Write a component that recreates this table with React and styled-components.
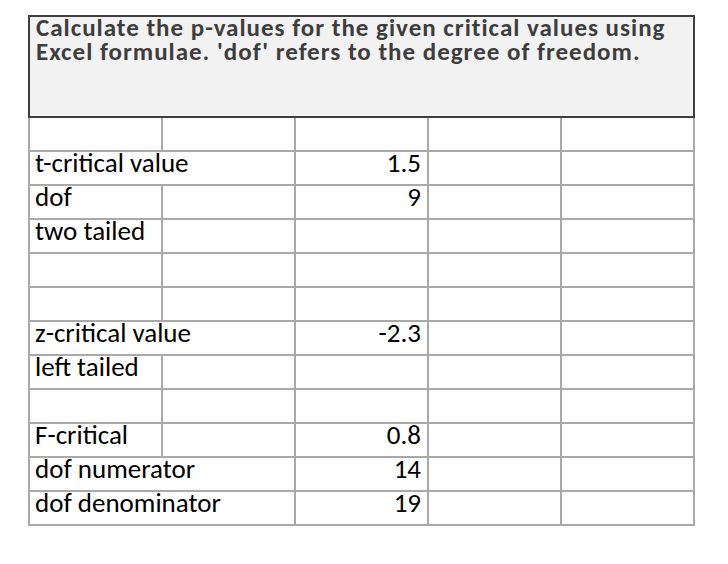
import React from "react";
import styled, { createGlobalStyle } from "styled-components";

const GlobalStyle = createGlobalStyle`
  html, body {
    margin: 0;
    padding: 0;
    background: #ffffff;
  }
  body {
    font-family: Carlito, Lato, "Liberation Sans", sans-serif;
  }
`;

const Sheet = styled.div`
  padding: 15px 0 0 28px;
  width: 667px;
`;

const Prompt = styled.div`
  box-sizing: border-box;
  height: 103px;
  border: 2px solid #3f3f3f;
  background: #f2f2f2;
  padding: 0 0 0 6px;
  color: #3d3d3d;
  font-weight: 700;
  font-size: 25px;
  letter-spacing: 1px;
`;

const PromptLine = styled.div`
  height: 24px;
  line-height: 22px;
  white-space: nowrap;
`;

const Grid = styled.div`
  display: grid;
  grid-template-columns: repeat(5, 133px);
  grid-auto-rows: 34px;
  border-left: 2px solid #a9a9a9;
`;

const Cell = styled.div`
  box-sizing: border-box;
  grid-column: span ${(p) => p.$span || 1};
  border-right: 2px solid #a9a9a9;
  border-bottom: 2px solid #a9a9a9;
  padding: 0 6px 0 5px;
  font-size: 27px;
  line-height: 22px;
  color: #000;
  white-space: nowrap;
  text-align: ${(p) => (p.$num ? "right" : "left")};
`;

const rows = [
  [],
  ["t-critical value", "1.5", true],
  ["dof", "9"],
  ["two tailed"],
  [],
  [],
  ["z-critical value", "-2.3", true],
  ["left tailed"],
  [],
  ["F-critical", "0.8"],
  ["dof numerator", "14", true],
  ["dof denominator", "19", true],
];

function Row({ label, value, wide }) {
  return (
    <>
      {wide ? (
        <Cell $span={2}>{label}</Cell>
      ) : (
        <>
          <Cell>{label}</Cell>
          <Cell />
        </>
      )}
      <Cell $num>{value}</Cell>
      <Cell />
      <Cell />
    </>
  );
}

export default function App() {
  return (
    <>
      <GlobalStyle />
      <Sheet>
        <Prompt>
          <PromptLine>Calculate the p-values for the given critical values using</PromptLine>
          <PromptLine>Excel formulae. 'dof' refers to the degree of freedom.</PromptLine>
        </Prompt>
        <Grid>
          {rows.map(([label, value, wide], i) => (
            <Row key={i} label={label} value={value} wide={wide} />
          ))}
        </Grid>
      </Sheet>
    </>
  );
}
